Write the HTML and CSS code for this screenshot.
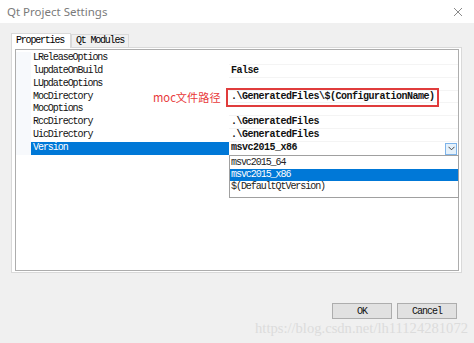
FILE: index.html
```html
<!DOCTYPE html>
<html lang="en">
  <head>
    <meta charset="UTF-8" />
    <title>Qt Project Settings</title>
    <link rel="stylesheet" href="styles.css">
  </head>
  <body>
    <div class="window">
      <!-- Title bar -->
      <div class="titlebar">
        <span class="title">Qt Project Settings</span>
        <svg class="close" width="10" height="10" viewBox="0 0 10 10">
          <path d="M1 1 L9 9 M9 1 L1 9" stroke="#8a8a8a" stroke-width="1" fill="none" />
        </svg>
      </div>

      <div class="content">
        <!-- Tabs -->
        <div class="tabs">
          <div class="tab active">Properties</div>
          <div class="tab">Qt Modules</div>
        </div>

        <div class="panel">
          <div class="grid">
            <div class="row"><span class="gutter"></span><span class="name">LReleaseOptions</span><span class="value"></span></div>
            <div class="row"><span class="gutter"></span><span class="name">lupdateOnBuild</span><span class="value">False</span></div>
            <div class="row"><span class="gutter"></span><span class="name">LUpdateOptions</span><span class="value"></span></div>
            <div class="row note-row">
              <span class="gutter"></span><span class="name">MocDirectory</span><span class="value">.\GeneratedFiles\$(ConfigurationName)</span>
              <span class="note">moc文件路径</span>
              <span class="note-box"></span>
            </div>
            <div class="row"><span class="gutter"></span><span class="name">MocOptions</span><span class="value"></span></div>
            <div class="row"><span class="gutter"></span><span class="name">RccDirectory</span><span class="value">.\GeneratedFiles</span></div>
            <div class="row"><span class="gutter"></span><span class="name">UicDirectory</span><span class="value">.\GeneratedFiles</span></div>
            <div class="row selected">
              <span class="gutter"></span><span class="name">Version</span>
              <span class="value combo">
                <span>msvc2015_x86</span>
                <span class="combo-btn">
                  <svg width="7" height="5" viewBox="0 0 7 5">
                    <path d="M0.5 0.8 L3.5 3.8 L6.5 0.8" stroke="#444" stroke-width="1" fill="none" />
                  </svg>
                </span>
              </span>
              <!-- Open dropdown list -->
              <div class="dropdown">
                <div class="option">msvc2015_64</div>
                <div class="option current">msvc2015_x86</div>
                <div class="option">$(DefaultQtVersion)</div>
              </div>
            </div>
          </div>
        </div>

        <div class="buttons">
          <button class="btn">OK</button>
          <button class="btn">Cancel</button>
        </div>
        <div class="watermark">https://blog.csdn.net/lh11124281072</div>
      </div>
    </div>
  </body>
</html>
```

FILE: styles.css
```css
/* Dialog frame */
body {
  margin: 0;
  font-family: "Liberation Mono", monospace;
}

.window {
  width: 474px;
  height: 343px;
  background: #f0f0f0;
  overflow: hidden;
}

/* Title bar */
.titlebar {
  height: 23px;
  background: #fff;
  display: flex;
  align-items: center;
  justify-content: space-between;
  padding: 0 11px 0 7px;
}

.title {
  font-family: "Noto Sans", sans-serif;
  font-size: 11.5px;
  color: #7a7a7a;
}

/* Main area */
.content {
  padding: 9px 12px 0 11px;
}

.tabs {
  display: flex;
  align-items: flex-end;
  height: 15px;
}

.tab {
  font-size: 10px;
  letter-spacing: -1.2px;
  height: 12px;
  line-height: 12px;
  padding: 0 4px 0 4px;
  border: 1px solid #d9d9d9;
  border-bottom: none;
  background: #f0f0f0;
  color: #000;
}

.tab.active {
  height: 14px;
  line-height: 14px;
  background: #fff;
  padding: 0 6px 0 4px;
  position: relative;
  top: 1px;
}

.panel {
  background: #fff;
  border: 1px solid #d9d9d9;
  padding: 1px 2px 1px 3px;
}

/* Property grid */
.grid {
  height: 220px;
  border: 1px solid #adadad;
  padding-top: 2.2px;
  box-sizing: border-box;
  height: 222px;
  background: #fff;
}

.row {
  display: flex;
  height: 12.8px;
  line-height: 12.8px;
  font-size: 10px;
  position: relative;
}

.gutter {
  width: 15px;
  background: #f7f9fc;
}

.name {
  width: 196px;
  padding-left: 2px;
  letter-spacing: -1.05px;
  color: #111;
}

.value {
  flex: 1;
  padding-left: 2px;
  font-weight: bold;
  letter-spacing: -0.5px;
  color: #111;
  border-bottom: 1px solid #f4f4f4;
  box-sizing: border-box;
}

.selected .name {
  background: #0078d7;
  color: #fff;
}

/* Combobox in the Version row */
.combo {
  display: flex;
  justify-content: space-between;
  border-bottom: none;
}

.combo-btn {
  width: 10px;
  height: 10px;
  margin: 1px 1px 0 0;
  border: 1px solid #7eb4ea;
  background: #e5f1fb;
  display: flex;
  align-items: center;
  justify-content: center;
}

.dropdown {
  position: absolute;
  left: 213px;
  top: 12.8px;
  width: 228px;
  background: #fff;
  border: 1px solid #a0a0a0;
  padding: 1px 0 3px 0;
  z-index: 2;
}

.option {
  height: 12.4px;
  line-height: 12.4px;
  padding-left: 1px;
  letter-spacing: -1.05px;
  color: #222;
}

.option.current {
  background: #0078d7;
  color: #fff;
}

/* Red annotation on MocDirectory */
.note {
  position: absolute;
  left: 136px;
  top: -1px;
  font-family: "Noto Sans CJK SC", sans-serif;
  font-size: 11.2px;
  line-height: 14px;
  color: #e8393a;
  background: #fff;
  padding: 0 1px;
}

.note-box {
  position: absolute;
  left: 210px;
  top: -3px;
  width: 209px;
  height: 15px;
  border: 2px solid #e03c3c;
}

/* Buttons */
.buttons {
  display: flex;
  justify-content: flex-end;
  gap: 5px;
  margin-top: 30px;
  padding-right: 5px;
}

.btn {
  width: 60px;
  height: 16px;
  padding: 0;
  font-family: "Liberation Mono", monospace;
  font-size: 10px;
  letter-spacing: -1px;
  background: #e1e1e1;
  border: 1px solid #adadad;
  color: #111;
}

.watermark {
  text-align: right;
  margin-top: 1px;
  margin-right: -6px;
  font-family: "Liberation Serif", serif;
  font-size: 14.6px;
  color: #dcdcdc;
  line-height: 16px;
}
```
